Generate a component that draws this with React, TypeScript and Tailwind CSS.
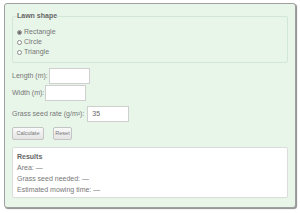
import { useState } from 'react'

const shapes = ['Rectangle', 'Circle', 'Triangle']

function Radio({ label, checked }: { label: string; checked: boolean }) {
  return (
    <div className="flex h-[10px] items-center gap-[2px]">
      <span className="flex h-[5px] w-[5px] items-center justify-center rounded-full border border-[#8a8a8a] bg-white">
        {checked && <span className="h-[3px] w-[3px] rounded-full bg-[#666]" />}
      </span>
      <span>{label}</span>
    </div>
  )
}

export default function App() {
  const [shape] = useState('Rectangle')

  return (
    <div
      className="h-[213px] w-[300px] bg-white pl-[4px] pt-[3px] text-[7px] text-[#777]"
      style={{ fontFamily: '"Liberation Sans", Arial, sans-serif' }}
    >
      <div className="h-[205px] w-[292px] rounded-[3px] border border-[#a0a0a0] bg-[#e8f5e9] px-[7px] pt-[8px] shadow-[1px_1px_1px_rgba(0,0,0,0.45)]">
        {/* Shape picker */}
        <fieldset className="rounded-[2px] border border-[#d3e8d4] px-[4px] pb-[5px]">
          <legend className="px-0 leading-[8px] font-semibold text-[#666]">Lawn shape</legend>
          <div className="mt-[7px] flex flex-col">
            {shapes.map((s) => (
              <Radio key={s} label={s} checked={s === shape} />
            ))}
          </div>
        </fieldset>

        {/* Inputs */}
        <div className="mt-[5px] flex flex-col gap-[1px]">
          <div className="flex items-center gap-[1px]">
            <span>Length (m):</span>
            <div className="h-[16px] w-[41px] border border-[#cfcfcf] bg-white" />
          </div>
          <div className="flex items-center gap-[1px]">
            <span>Width (m):</span>
            <div className="h-[16px] w-[41px] border border-[#cfcfcf] bg-white" />
          </div>
        </div>
        <div className="mt-[5px] flex items-center gap-[3px]">
          <span>Grass seed rate (g/m²):</span>
          <div className="flex h-[16px] w-[42px] items-center border border-[#cfcfcf] bg-white pl-[4px] text-[#666]">
            35
          </div>
        </div>

        {/* Actions */}
        <div className="mt-[5px] flex gap-[9px]">
          <button className="h-[13px] w-[32px] rounded-[2px] border border-[#c4c4c4] bg-gradient-to-b from-[#fafafa] to-[#e4e4e4] text-[5.5px] text-[#777]">
            Calculate
          </button>
          <button className="h-[13px] w-[19px] rounded-[2px] border border-[#c4c4c4] bg-gradient-to-b from-[#fafafa] to-[#e4e4e4] text-[5.5px] text-[#777]">
            Reset
          </button>
        </div>

        {/* Results */}
        <div className="mt-[7px] h-[51px] rounded-[2px] border border-[#dcdcdc] bg-white pl-[4px] pt-[3px] leading-[11px]">
          <div className="font-semibold text-[#666]">Results</div>
          <div>Area: —</div>
          <div>Grass seed needed: —</div>
          <div>Estimated mowing time: —</div>
        </div>
      </div>
    </div>
  )
}
